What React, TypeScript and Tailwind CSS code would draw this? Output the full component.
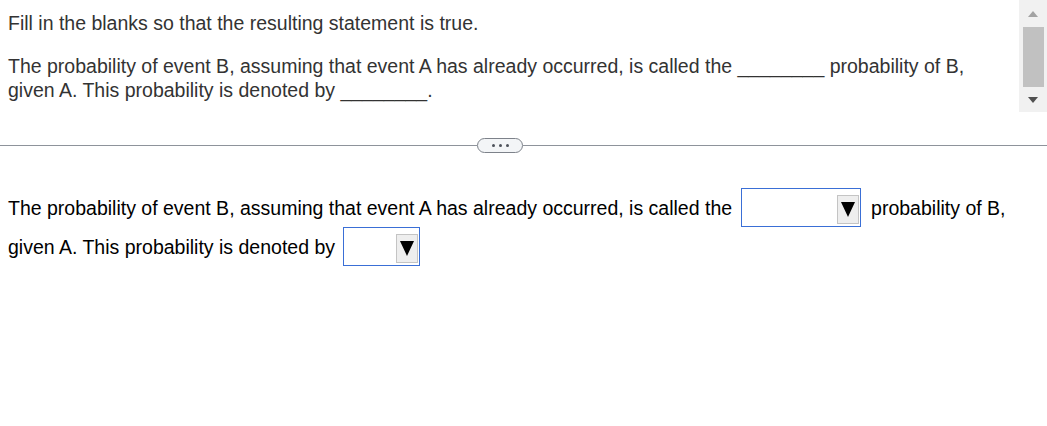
import React from "react";

const font = { fontFamily: '"Liberation Sans", Arial, sans-serif' };

// fake dropdown: white box with blue border and a grey arrow button
const Dropdown = ({ w }: { w: string }) => (
  <span className={`inline-flex ${w} h-[39px] shrink-0 items-center justify-end border border-[#3a6fd6] bg-white pr-[1px] pt-[4px]`}>
    <span className="flex h-[29px] w-[22px] items-center justify-center border border-[#c4c4c4] bg-[#eeeeee]">
      <svg width="14" height="15" viewBox="0 0 14 15">
        <polygon points="0,0 14,0 7,15" fill="#000" />
      </svg>
    </span>
  </span>
);

const Scrollbar = () => (
  <div className="flex h-[112px] w-[28px] shrink-0 flex-col items-center bg-[#f1f1f1]">
    <div className="flex h-[27px] w-full items-center justify-center">
      <svg width="10" height="6" viewBox="0 0 10 6">
        <polygon points="5,0 10,6 0,6" fill="#a3a3a3" />
      </svg>
    </div>
    <div className="h-[60px] w-[21px] bg-[#c1c1c1]" />
    <div className="flex h-[25px] w-full items-center justify-center">
      <svg width="10" height="6" viewBox="0 0 10 6">
        <polygon points="0,0 10,0 5,6" fill="#505050" />
      </svg>
    </div>
  </div>
);

export default function App() {
  return (
    <div className="h-[426px] w-[1047px] bg-white" style={font}>
      {/* question box */}
      <div className="flex h-[112px]">
        <div className="flex-1 pl-[8px] pt-[11px] text-[19.5px] leading-[24px] text-[#333333]">
          <p>Fill in the blanks so that the resulting statement is true.</p>
          <p className="mt-[19px]">
            The probability of event B, assuming that event A has already occurred, is called the ________ probability of B,
            <br />
            given A. This probability is denoted by ________.
          </p>
        </div>
        <Scrollbar />
      </div>

      {/* divider with pill */}
      <div className="mt-[26px] flex items-center">
        <div className="h-px w-[477px] bg-[#8e939b]" />
        <div className="flex h-[15px] w-[46px] items-center justify-center gap-[4px] rounded-full border border-[#7d828a] bg-[#f3f5f7]">
          <span className="h-[3px] w-[3px] rounded-full bg-[#4d525a]" />
          <span className="h-[3px] w-[3px] rounded-full bg-[#4d525a]" />
          <span className="h-[3px] w-[3px] rounded-full bg-[#4d525a]" />
        </div>
        <div className="h-px flex-1 bg-[#8e939b]" />
      </div>

      {/* answer area */}
      <div className="mt-[35px] pl-[8px] text-[19.5px] text-black">
        <div className="flex h-[39px] items-center">
          <span className="pt-[3px]">The probability of event B, assuming that event A has already occurred, is called the</span>
          <span className="ml-[9px] flex">
            <Dropdown w="w-[120px]" />
          </span>
          <span className="ml-[10px] pt-[3px]">probability of B,</span>
        </div>
        <div className="flex h-[39px] items-center">
          <span className="pt-[3px]">given A. This probability is denoted by</span>
          <span className="ml-[8px] flex">
            <Dropdown w="w-[77px]" />
          </span>
        </div>
      </div>
    </div>
  );
}
